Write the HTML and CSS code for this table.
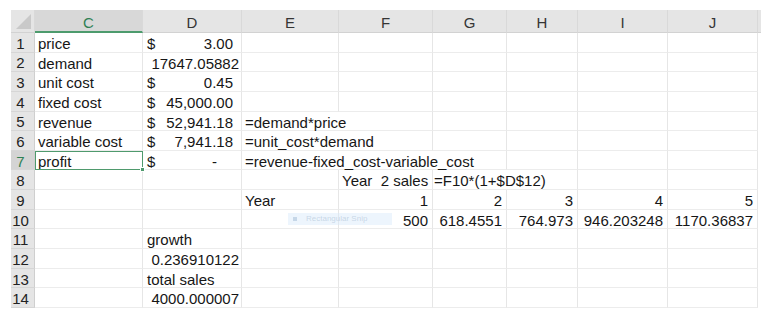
FILE: index.html
```html
<!DOCTYPE html>
<html>
<head>
<meta charset="utf-8">
<link rel="stylesheet" href="styles.css">
</head>
<body>
<div class="sheet">
  <div class="hd corner"><span class="tri"></span></div>
  <div class="hd col sel-col">C</div>
  <div class="hd col">D</div>
  <div class="hd col">E</div>
  <div class="hd col">F</div>
  <div class="hd col">G</div>
  <div class="hd col">H</div>
  <div class="hd col">I</div>
  <div class="hd col">J</div>
  <div class="hd tail"></div>

  <!-- row 1 -->
  <div class="rn">1</div>
  <div class="c">price</div>
  <div class="c acc"><span>$</span><span>3.00</span></div>
  <div class="c"></div><div class="c"></div><div class="c"></div><div class="c"></div><div class="c"></div><div class="c"></div><div class="x"></div>

  <!-- row 2 -->
  <div class="rn">2</div>
  <div class="c">demand</div>
  <div class="c r2">17647.05882</div>
  <div class="c"></div><div class="c"></div><div class="c"></div><div class="c"></div><div class="c"></div><div class="c"></div><div class="x"></div>

  <!-- row 3 -->
  <div class="rn">3</div>
  <div class="c">unit cost</div>
  <div class="c acc"><span>$</span><span>0.45</span></div>
  <div class="c"></div><div class="c"></div><div class="c"></div><div class="c"></div><div class="c"></div><div class="c"></div><div class="x"></div>

  <!-- row 4 -->
  <div class="rn">4</div>
  <div class="c">fixed cost</div>
  <div class="c acc"><span>$</span><span>45,000.00</span></div>
  <div class="c"></div><div class="c"></div><div class="c"></div><div class="c"></div><div class="c"></div><div class="c"></div><div class="x"></div>

  <!-- row 5 -->
  <div class="rn">5</div>
  <div class="c">revenue</div>
  <div class="c acc"><span>$</span><span>52,941.18</span></div>
  <div class="c span2">=demand*price</div>
  <div class="c"></div><div class="c"></div><div class="c"></div><div class="c"></div><div class="x"></div>

  <!-- row 6 -->
  <div class="rn">6</div>
  <div class="c">variable cost</div>
  <div class="c acc"><span>$</span><span>7,941.18</span></div>
  <div class="c span2">=unit_cost*demand</div>
  <div class="c"></div><div class="c"></div><div class="c"></div><div class="c"></div><div class="x"></div>

  <!-- row 7 -->
  <div class="rn sel-row">7</div>
  <div class="c active">profit<span class="handle"></span></div>
  <div class="c acc"><span>$</span><span class="dash">-</span></div>
  <div class="c span3">=revenue-fixed_cost-variable_cost</div>
  <div class="c"></div><div class="c"></div><div class="c"></div><div class="x"></div>

  <!-- row 8 -->
  <div class="rn">8</div>
  <div class="c"></div>
  <div class="c"></div>
  <div class="c"></div>
  <div class="c yr pre">Year  2 sales</div>
  <div class="c span2 f8">=F10*(1+$D$12)</div>
  <div class="c"></div><div class="c"></div><div class="x"></div>

  <!-- row 9 -->
  <div class="rn">9</div>
  <div class="c"></div>
  <div class="c"></div>
  <div class="c">Year</div>
  <div class="c num">1</div>
  <div class="c num">2</div>
  <div class="c num">3</div>
  <div class="c num">4</div>
  <div class="c num">5</div>
  <div class="x"></div>

  <!-- row 10 -->
  <div class="rn">10</div>
  <div class="c"></div>
  <div class="c"></div>
  <div class="c snipcell"><span class="snip"><span class="snip-ic"></span>Rectangular Snip</span></div>
  <div class="c num">500</div>
  <div class="c num">618.4551</div>
  <div class="c num">764.973</div>
  <div class="c num">946.203248</div>
  <div class="c num">1170.36837</div>
  <div class="x"></div>

  <!-- row 11 -->
  <div class="rn">11</div>
  <div class="c"></div>
  <div class="c dl">growth</div>
  <div class="c"></div><div class="c"></div><div class="c"></div><div class="c"></div><div class="c"></div><div class="c"></div><div class="x"></div>

  <!-- row 12 -->
  <div class="rn">12</div>
  <div class="c"></div>
  <div class="c r2">0.236910122</div>
  <div class="c"></div><div class="c"></div><div class="c"></div><div class="c"></div><div class="c"></div><div class="c"></div><div class="x"></div>

  <!-- row 13 -->
  <div class="rn">13</div>
  <div class="c"></div>
  <div class="c dl">total sales</div>
  <div class="c"></div><div class="c"></div><div class="c"></div><div class="c"></div><div class="c"></div><div class="c"></div><div class="x"></div>

  <!-- row 14 -->
  <div class="rn">14</div>
  <div class="c"></div>
  <div class="c r2">4000.000007</div>
  <div class="c"></div><div class="c"></div><div class="c"></div><div class="c"></div><div class="c"></div><div class="c"></div><div class="x"></div>
</div>
</body>
</html>
```

FILE: styles.css
```css
* { box-sizing: border-box; }
html, body { margin: 0; padding: 0; background: #ffffff; }
body {
  font-family: "Liberation Sans", Arial, sans-serif;
  color: #161616;
}
.sheet {
  margin: 10px 0 0 11px;
  display: grid;
  grid-template-columns: 24px 108px 99px 97px 94px 74px 71px 90px 90px 3px;
  grid-template-rows: 23px repeat(14, 19.65px);
  width: 750px;
}
.hd {
  background: #e5e5e5;
  border-bottom: 1px solid #d2d2d2;
  font-size: 15px;
  color: #353535;
  display: flex;
  align-items: center;
  justify-content: center;
}
.hd.col { border-right: 1px solid #d9d9d9; padding-top: 3px; }
.hd.tail { border-right: none; }
.corner { position: relative; border-right: 1px solid #d9d9d9; }
.tri {
  position: absolute;
  right: 3px;
  bottom: 3px;
  width: 0;
  height: 0;
  border-left: 15px solid transparent;
  border-bottom: 15px solid #c9c9c9;
}
.sel-col {
  background: #d8d8d8;
  color: #2f8053;
  border-bottom: 2px solid #4d9b6d;
}
.rn {
  background: #e5e5e5;
  border-right: 1px solid #cfcfcf;
  border-bottom: 1px solid #d6d6d6;
  font-size: 15px;
  color: #222;
  display: flex;
  align-items: center;
  justify-content: center;
  padding: 2px 4px 0 0;
}
.sel-row { background: #d4d4d4; color: #2f8053; }
.c {
  border-right: 1px solid #e6e6e6;
  border-bottom: 1px solid #ececec;
  font-size: 15px;
  line-height: 18px;
  padding: 2px 3px 0 3px;
  white-space: nowrap;
  overflow: visible;
  position: relative;
  background: #fff;
}
.x { background: #fff; }
.acc {
  display: flex;
  justify-content: space-between;
  padding: 2px 8px 0 4px;
}
.dash { padding-right: 16px; }
.r2 { text-align: right; padding-right: 2px; }
.dl { padding-left: 4px; }
.num { text-align: right; padding-right: 4px; }
.yr { text-align: right; padding-right: 8px; }
.f8 { padding-left: 1px; }
.pre { white-space: pre; }
.span2 { grid-column: span 2; }
.span3 { grid-column: span 3; }
.active { outline: 1px solid #4f9a6d; outline-offset: -1px; z-index: 2; }
.handle {
  position: absolute;
  right: -3px;
  bottom: -3px;
  width: 5px;
  height: 5px;
  background: #4f9a6d;
  border: 1px solid #fff;
}
.snipcell { overflow: visible; }
.snip {
  position: absolute;
  left: 46px;
  top: 3px;
  width: 104px;
  height: 12px;
  background: rgba(214, 232, 250, 0.45);
  font-size: 8px;
  line-height: 12px;
  color: rgba(150, 175, 200, 0.45);
  padding-left: 18px;
  z-index: 3;
}
.snip-ic {
  position: absolute;
  left: 5px;
  top: 4px;
  width: 4px;
  height: 4px;
  background: rgba(140, 170, 200, 0.4);
}
```
